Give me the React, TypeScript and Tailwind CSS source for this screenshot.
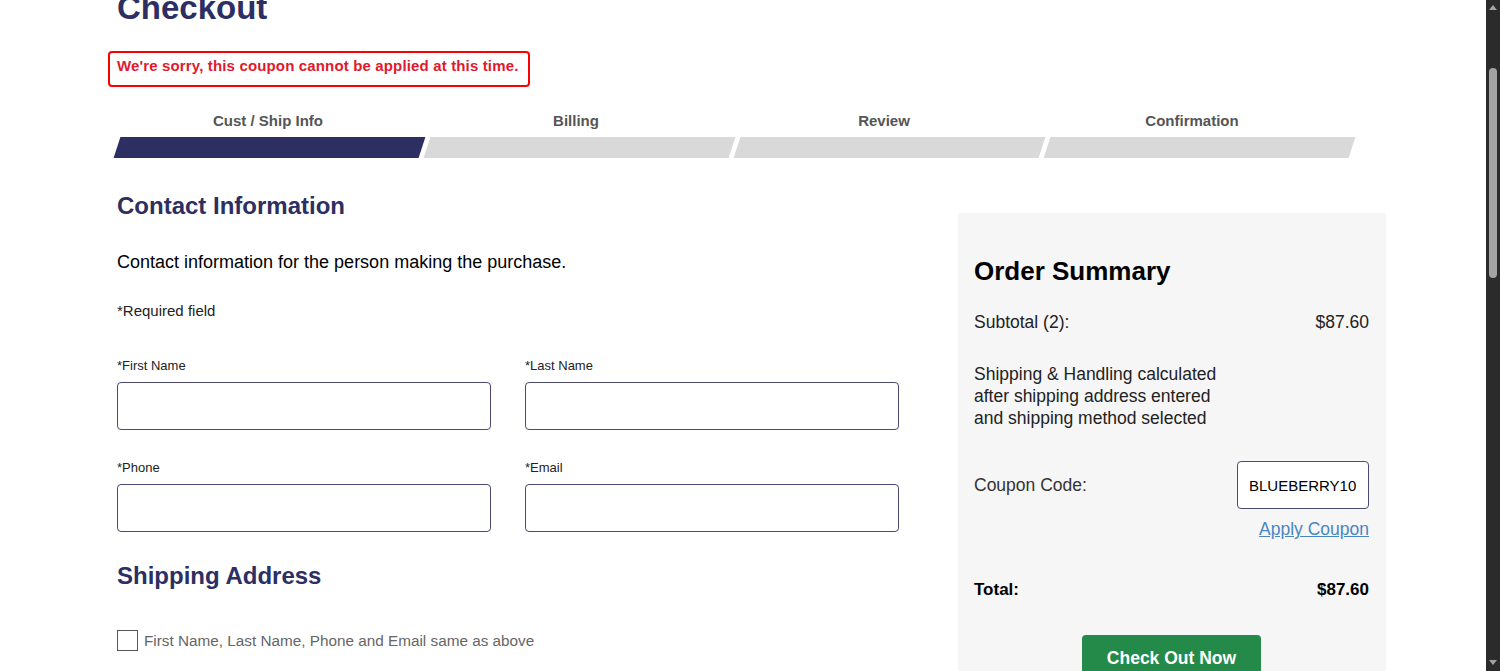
import React, { FC } from "react";

const steps = ["Cust / Ship Info", "Billing", "Review", "Confirmation"];

const Field: FC<{ label: string }> = ({ label }) => {
  return (
    <div className="flex flex-col">
      <label className="text-[13px] leading-4 text-[#222]">{label}</label>
      <input
        type="text"
        className="mt-2 h-[48px] w-full rounded border border-[#4b4a73] bg-white px-3 text-[15px] outline-none"
      />
    </div>
  );
};

const StepBar: FC = () => {
  return (
    <div>
      <div className="ml-[-3px] flex">
        {steps.map((step) => (
          <div
            key={step}
            className="w-[308px] text-center text-[15px] font-bold leading-[17px] text-[#555]"
          >
            {step}
          </div>
        ))}
      </div>
      <div className="mt-2 flex gap-[5px]">
        {steps.map((step, i) => (
          <div
            key={step}
            className={
              i === 0
                ? "h-[21px] w-[305px] -skew-x-[18deg] bg-[#2d2f62]"
                : "h-[21px] w-[305px] -skew-x-[18deg] bg-[#d9d9d9]"
            }
          />
        ))}
      </div>
    </div>
  );
};

const OrderSummary: FC = () => {
  return (
    <div className="w-[428px] shrink-0 bg-[#f6f6f6] pl-4 pr-[17px] pt-[43px] pb-10 text-[#222]">
      <h2 className="text-[26px] font-bold leading-[30px] text-black">Order Summary</h2>
      <div className="mt-[25px] flex justify-between text-[17.5px] leading-[22px]">
        <span>Subtotal (2):</span>
        <span>$87.60</span>
      </div>
      <p className="mt-[30px] w-[250px] text-[17.5px] leading-[22px]">
        Shipping &amp; Handling calculated after shipping address entered and
        shipping method selected
      </p>
      <div className="mt-[32px] flex items-center justify-between">
        <span className="text-[17.5px] leading-[22px] text-[#333]">Coupon Code:</span>
        <input
          type="text"
          defaultValue="BLUEBERRY10"
          className="h-[48px] w-[132px] rounded border border-[#4b4a73] bg-white px-[11px] text-[15px] text-black outline-none"
        />
      </div>
      <div className="mt-[9px] text-right">
        <a href="#" className="text-[17.5px] leading-[22px] text-[#4a86c5] underline">
          Apply Coupon
        </a>
      </div>
      <div className="mt-[37px] flex justify-between text-[17px] font-bold leading-[22px] text-black">
        <span>Total:</span>
        <span>$87.60</span>
      </div>
      <div className="mt-[34px] flex justify-center">
        <button className="h-[46px] w-[179px] rounded-sm bg-[#238a4a] text-[17.5px] font-bold text-white">
          Check Out Now
        </button>
      </div>
    </div>
  );
};

const App: FC = () => {
  return (
    <div
      className="flex h-[671px] w-[1500px] overflow-hidden bg-white"
      style={{ fontFamily: '"Liberation Sans", Arial, sans-serif' }}
    >
      <div className="flex-1 overflow-hidden pl-[117px]">
        <h1 className="-mt-[11px] text-[33px] font-bold leading-[38px] text-[#2d2f62]">
          Checkout
        </h1>
        <div className="ml-[-9px] mt-6 h-[36px] w-[422px] rounded-sm border-2 border-[#f00] px-[7px] pt-[1px]">
          <span className="whitespace-nowrap text-[15px] font-bold leading-[18px] tracking-[0.15px] text-[#e1192c]">
            We're sorry, this coupon cannot be applied at this time.
          </span>
        </div>
        <div className="mt-[25px]">
          <StepBar />
        </div>

        <div className="mt-[34px] flex gap-[59px]">
          <div className="w-[782px]">
            <h2 className="text-[24px] font-bold leading-7 text-[#2d2f62]">
              Contact Information
            </h2>
            <p className="mt-[31px] text-[18px] leading-[22px] text-black">
              Contact information for the person making the purchase.
            </p>
            <p className="mt-[29px] text-[15px] leading-[18px] text-[#222]">
              *Required field
            </p>
            <div className="mt-[38px] grid grid-cols-2 gap-x-[34px] gap-y-[30px]">
              <Field label="*First Name" />
              <Field label="*Last Name" />
              <Field label="*Phone" />
              <Field label="*Email" />
            </div>
            <h2 className="mt-[30px] text-[24px] font-bold leading-7 text-[#2d2f62]">
              Shipping Address
            </h2>
            <label className="mt-[40px] flex items-center gap-[6px]">
              <span className="h-[21px] w-[21px] border border-[#555] bg-white" />
              <span className="text-[15.3px] leading-5 text-[#666]">
                First Name, Last Name, Phone and Email same as above
              </span>
            </label>
          </div>
          <div className="mt-[21px]">
            <OrderSummary />
          </div>
        </div>
      </div>

      <div className="flex h-[671px] w-[14px] shrink-0 flex-col items-center bg-[#2b2b2b]">
        <div className="mt-[5px] h-0 w-0 border-x-[4px] border-b-[5px] border-x-transparent border-b-[#a3a3a3]" />
        <div className="mt-[58px] h-[210px] w-[8px] rounded-full bg-[#a3a3a3]" />
        <div className="flex-1" />
        <div className="mb-[6px] h-0 w-0 border-x-[4px] border-t-[5px] border-x-transparent border-t-[#a3a3a3]" />
      </div>
    </div>
  );
};

export default App;
